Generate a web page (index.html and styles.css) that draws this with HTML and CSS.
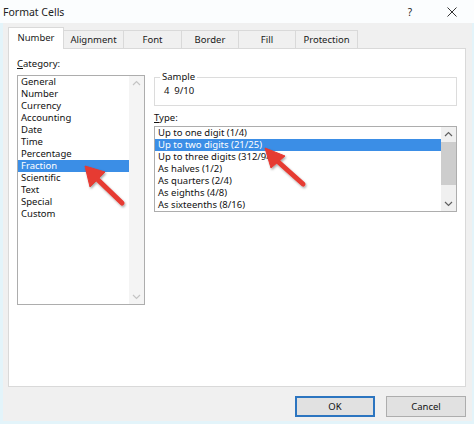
FILE: index.html
```html
<!DOCTYPE html>
<html>
<head>
<meta charset="utf-8">
<link rel="stylesheet" href="styles.css">
</head>
<body>
<div class="window">
  <div class="titlebar">
    <span class="title">Format Cells</span>
    <span class="help">?</span>
    <svg class="close" width="10" height="10" viewBox="0 0 10 10"><path d="M0.5 0.5 L9.5 9.5 M9.5 0.5 L0.5 9.5" stroke="#333" stroke-width="1" fill="none"/></svg>
  </div>
  <div class="content">
    <div class="tabs">
      <div class="tab active">Number</div>
      <div class="tab w-align">Alignment</div>
      <div class="tab w-font">Font</div>
      <div class="tab w-border">Border</div>
      <div class="tab w-fill">Fill</div>
      <div class="tab w-prot">Protection</div>
    </div>
    <div class="panel">
      <div class="leftcol">
        <div class="label"><u>C</u>ategory:</div>
        <div class="listbox catlist">
          <div class="items">
            <div class="item">General</div>
            <div class="item">Number</div>
            <div class="item">Currency</div>
            <div class="item">Accounting</div>
            <div class="item">Date</div>
            <div class="item">Time</div>
            <div class="item">Percentage</div>
            <div class="item sel">Fraction</div>
            <div class="item">Scientific</div>
            <div class="item">Text</div>
            <div class="item">Special</div>
            <div class="item">Custom</div>
          </div>
          <div class="scroll light">
            <svg class="arr" width="9" height="6" viewBox="0 0 9 6"><path d="M1 5 L4.5 1.5 L8 5" stroke="#c4c4c4" stroke-width="1.2" fill="none"/></svg>
            <div class="track"></div>
            <svg class="arr" width="9" height="6" viewBox="0 0 9 6"><path d="M1 1 L4.5 4.5 L8 1" stroke="#c4c4c4" stroke-width="1.2" fill="none"/></svg>
          </div>
        </div>
      </div>
      <div class="rightcol">
        <fieldset class="sample">
          <legend>Sample</legend>
          <div class="sampleval">4&nbsp;&nbsp;9/10</div>
        </fieldset>
        <div class="label"><u>T</u>ype:</div>
        <div class="listbox typelist">
          <div class="items">
            <div class="item">Up to one digit (1/4)</div>
            <div class="item sel">Up to two digits (21/25)</div>
            <div class="item">Up to three digits (312/943)</div>
            <div class="item">As halves (1/2)</div>
            <div class="item">As quarters (2/4)</div>
            <div class="item">As eighths (4/8)</div>
            <div class="item">As sixteenths (8/16)</div>
          </div>
          <div class="scroll">
            <svg class="arr" width="9" height="6" viewBox="0 0 9 6"><path d="M1 5 L4.5 1.5 L8 5" stroke="#606060" stroke-width="1.2" fill="none"/></svg>
            <div class="track"><div class="thumb"></div></div>
            <svg class="arr" width="9" height="6" viewBox="0 0 9 6"><path d="M1 1 L4.5 4.5 L8 1" stroke="#606060" stroke-width="1.2" fill="none"/></svg>
          </div>
        </div>
      </div>
    </div>
    <div class="footer">
      <div class="btn ok">OK</div>
      <div class="btn">Cancel</div>
    </div>
  </div>
  <svg class="arrows" width="474" height="424" viewBox="0 0 474 424">
    <defs>
      <filter id="sh" x="-20%" y="-20%" width="140%" height="140%">
        <feDropShadow dx="1" dy="1.5" stdDeviation="1.2" flood-color="#000" flood-opacity="0.35"/>
      </filter>
    </defs>
    <g filter="url(#sh)" fill="#e63a33" stroke="#e63a33">
      <line x1="122" y1="203" x2="94" y2="176" stroke-width="5" stroke-linecap="round"/>
      <polygon points="85,166 105,172 90,187" stroke-width="1" stroke-linejoin="round"/>
      <line x1="303" y1="184" x2="275" y2="159" stroke-width="5" stroke-linecap="round"/>
      <polygon points="265,148 285,156 271,168" stroke-width="1" stroke-linejoin="round"/>
    </g>
  </svg>
</div>
</body>
</html>
```
FILE: styles.css
```css
* { box-sizing: border-box; }
html, body { margin: 0; padding: 0; }
body { width: 474px; height: 424px; overflow: hidden; font-family: "Noto Sans", "Open Sans", sans-serif; color: #111; }
.window {
  position: relative;
  width: 474px; height: 424px;
  background: #f0f0f0;
  border-left: 3px solid #e3f4fa;
  border-right: 2px solid #e3f4fa;
  border-bottom: 3px solid #e3f4fa;
  display: flex; flex-direction: column;
}
.titlebar {
  height: 23px; background: #fbfdfe;
  display: flex; align-items: center;
  font-size: 10.5px; color: #222;
  margin-left: -3px; margin-right: -2px; padding-left: 3px;
}
.title { flex: 1; }
.help { width: 14px; font-size: 10px; margin-right: 30px; text-align: center; }
.close { margin-right: 17px; }
.content { flex: 1; display: flex; flex-direction: column; padding: 4px 6px 0 5px; }
.tabs { display: flex; align-items: flex-end; height: 21px; position: relative; z-index: 1; }
.tab {
  height: 18px; border: 1px solid #d9d9d9; border-left: none; border-bottom: none;
  font-size: 9.5px; display: flex; align-items: center; justify-content: center;
  background: #f0f0f0; color: #1a1a1a;
}
.tab.active { height: 22px; width: 56px; background: #fff; border-left: 1px solid #d9d9d9; margin-bottom: -1px; padding-bottom: 2px; }
.w-align { width: 60px; }
.w-font { width: 58px; }
.w-border { width: 57px; }
.w-fill { width: 57px; }
.w-prot { width: 62px; }
.panel {
  height: 339px; background: #fff; border: 1px solid #d9d9d9;
  display: flex; padding: 9px 8px 0 8px; gap: 9px;
}
.label { font-size: 9.5px; height: 12px; line-height: 12px; }
.leftcol { width: 128px; display: flex; flex-direction: column; }
.leftcol .label { margin-bottom: 5px; }
.listbox { border: 1px solid #adadad; display: flex; background: #fff; }
.catlist { height: 230px; }
.typelist { height: 86px; margin-top: 2px; }
.items { flex: 1; overflow: hidden; }
.item { height: 12px; line-height: 12px; font-size: 9.5px; padding-left: 3px; white-space: nowrap; color: #111; }
.item.sel { background: #3b8ee6; color: #fff; }
.scroll { width: 15px; display: flex; flex-direction: column; align-items: center; background: #f0f0f0; }
.scroll.light { background: #f4f4f4; }
.scroll .arr { margin: 4px 0; flex: none; }
.track { flex: 1; width: 100%; display: flex; flex-direction: column; }
.thumb { width: 100%; height: 43px; background: #cdcdcd; margin-top: 1px; }
.rightcol { flex: 1; display: flex; flex-direction: column; }
.sample {
  margin: 13px 0 0 0; padding: 0 0 0 9px; height: 35px;
  border: 1px solid #dcdcdc; border-radius: 0;
}
.sample legend { font-size: 9.5px; padding: 0 2px; margin-left: -4px; line-height: 12px; }
.sampleval { font-size: 9.5px; line-height: 12px; margin-top: 2px; }
.rightcol .label { margin-top: 6px; }
.footer { flex: 1; display: flex; justify-content: flex-end; align-items: flex-start; padding-top: 9px; gap: 11px; }
.btn {
  width: 80px; height: 21px; background: #e1e1e1; border: 1px solid #adadad;
  font-size: 9.5px; display: flex; align-items: center; justify-content: center;
}
.btn.ok { border: 2px solid #2c75c0; }
.arrows { position: absolute; left: -3px; top: 0; pointer-events: none; }
```
